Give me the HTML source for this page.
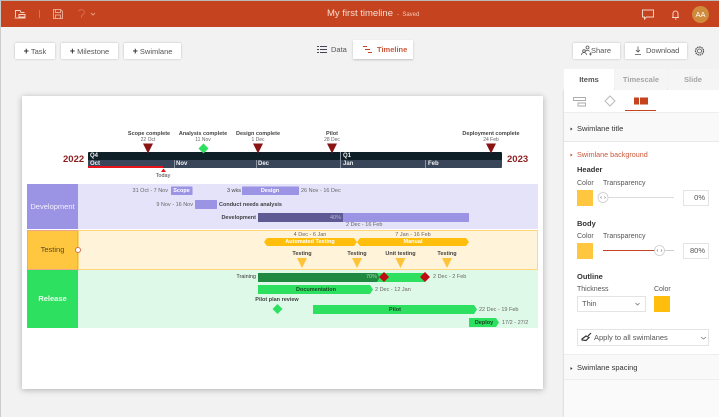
<!DOCTYPE html>
<html><head><meta charset="utf-8">
<style>
html,body{margin:0;padding:0}
body{width:719px;height:417px;overflow:hidden;position:relative;background:#f2f2f2;font-family:"Liberation Sans",sans-serif;color:#444}
.a{position:absolute}
.t{position:absolute;white-space:nowrap;line-height:1}
.c{transform:translateX(-50%)}
.r{transform:translateX(-100%)}
.btn{position:absolute;background:#fff;box-shadow:0 0 2px rgba(0,0,0,.22);border-radius:1px;font-size:7.500px;color:#555;line-height:16px;text-align:center}
.lb{font-size:5.500px;color:#222;font-weight:bold;opacity:.85}
.dt{font-size:5.500px;color:#666}
.ms{font-size:5px;color:#666}
.panel{font-size:7px;color:#555}
.h{font-size:7.500px;color:#333;font-weight:bold}
svg{position:absolute;overflow:visible}
</style></head><body>
<div class="a" style="left:0;top:0;width:719px;height:1px;background:#bbb"></div>
<div class="a" style="left:0;top:1px;width:1px;height:416px;background:#ccc"></div>
<div class="a" style="left:1px;top:1px;width:718px;height:26px;background:#c5431f"></div>

<svg style="left:0;top:0" width="719" height="30" fill="none" stroke="#f5d5c8" stroke-width="1">
<path d="M15 10.500h5l1 2h3.500M15.500 10.500v6.500M19 14.500h6v2.500h-6z M14.500 18h11"/>
<path d="M39.500 10v8" stroke="#d8745a"/>
<path d="M53.500 9.500h7l2 2v7h-9z M55.500 9.500v3h5v-3 M55.500 18.500v-3.500h5v3.500" stroke="#eba58f"/>
<path d="M78 11l3-1.500c3 0 4 2 3 4l-2.500 2.500v2" stroke="#d4694b"/>
<path d="M91 13l2 2 2-2" stroke="#e79a83"/>
<path d="M642.500 10h11v7h-7l-2 2v-2h-2z"/>
<path d="M672 17.500h7M673 17.500v-4a2.500 2.500 0 0 1 5 0v4M675 19h1.500"/>
</svg>
<div class="t" style="left:327px;top:9px;font-size:9.500px;color:#f8dfd5">My first timeline</div>
<div class="t" style="left:397px;top:12px;font-size:6px;color:#f3c9b8">-&nbsp;&nbsp;Saved</div>
<div class="a" style="left:692px;top:6px;width:17px;height:17px;border-radius:50%;background:#cf8a3c;color:#fff;font-size:7.500px;line-height:17px;text-align:center">AA</div>

<div class="btn" style="left:15px;top:43px;width:40px;height:16px"><b style="color:#333;font-size:9px">+</b> Task</div>
<div class="btn" style="left:61px;top:43px;width:57px;height:16px"><b style="color:#333;font-size:9px">+</b> Milestone</div>
<div class="btn" style="left:124px;top:43px;width:57px;height:16px"><b style="color:#333;font-size:9px">+</b> Swimlane</div>
<svg style="left:0;top:0" width="719" height="70" fill="none">
<path d="M317 46.500h2M320 46.500h7M317 49.500h2M320 49.500h7M317 52.500h2M320 52.500h7" stroke="#445"/>
</svg>
<div class="t" style="left:331px;top:46px;font-size:7.500px;color:#555">Data</div>
<div class="a" style="left:353px;top:40px;width:60px;height:19px;background:#fff;box-shadow:0 1px 2px rgba(0,0,0,.2)"></div>
<svg style="left:0;top:0" width="719" height="70" fill="none">
<path d="M363 46.500h4M365 49.500h5M368 52.500h4" stroke="#c5431f"/>
</svg>
<div class="t" style="left:377px;top:46px;font-size:7.500px;color:#c9583a;font-weight:bold">Timeline</div>
<div class="btn" style="left:573px;top:43px;width:47px;height:16px;padding-left:18px;box-sizing:border-box;text-align:left">Share</div>
<div class="btn" style="left:625px;top:43px;width:62px;height:16px;padding-left:21px;box-sizing:border-box;text-align:left">Download</div>
<svg style="left:0;top:0" width="719" height="70" fill="none" stroke="#555" stroke-width=".8">
<circle cx="584" cy="51" r="1.300"/><path d="M581.500 55a2.500 2.500 0 0 1 5 0"/>
<circle cx="587.500" cy="47.500" r="1.500"/><path d="M585.500 51.500a2.200 2.200 0 0 1 4 0M589 54h3M590.500 52.500v3"/>
<path d="M638 46.500v5.500M636 50l2 2 2-2M635 54.500h6"/>
<circle cx="699.500" cy="51" r="2"/><circle cx="699.500" cy="51" r="4" stroke-dasharray="1.600 .7" stroke-width="1.300"/>
</svg>

<!-- slide -->
<div class="a" style="left:22px;top:96px;width:521px;height:293px;background:#fff;box-shadow:0 1px 6px rgba(0,0,0,.28)"></div>

<!-- swimlanes -->
<div class="a" style="left:78px;top:184px;width:460px;height:45px;background:#e5e3f9"></div>
<div class="a" style="left:27px;top:184px;width:51px;height:45px;background:#9b93e4;color:#f4f2ff;font-size:7.500px;line-height:45px;text-align:center">Development</div>
<div class="a" style="left:78px;top:230px;width:460px;height:40px;box-sizing:border-box;background:#fff3da;border:1px solid #ffd67a"></div>
<div class="a" style="left:27px;top:229.500px;width:51px;height:40px;box-sizing:border-box;background:#ffc73f;border:1px solid #eda48c;color:#5a4a20;font-size:7.500px;line-height:38px;text-align:center">Testing</div>
<div class="a" style="left:75px;top:246.500px;width:4px;height:4px;background:#fff;border:1px solid #d9704f;border-radius:50%"></div>
<div class="a" style="left:78px;top:270px;width:460px;height:57.500px;background:#dff9e8"></div>
<div class="a" style="left:27px;top:270px;width:51px;height:57.500px;background:#2ee060;color:#eafff0;font-size:7.500px;font-weight:bold;line-height:57px;text-align:center">Release</div>

<!-- timescale -->
<div class="a" style="left:88px;top:152px;width:414px;height:8px;background:#0e1f27;border-radius:1px 1px 0 0"></div>
<div class="a" style="left:88px;top:160px;width:414px;height:8px;background:#39465a;border-radius:0 0 1px 1px"></div>
<div class="a" style="left:88px;top:166px;width:75px;height:1.500px;background:#e8141c"></div>
<div class="a" style="left:174px;top:160px;width:.7px;height:8px;background:#8b95a3"></div>
<div class="a" style="left:256px;top:160px;width:.7px;height:8px;background:#8b95a3"></div>
<div class="a" style="left:340px;top:152px;width:.7px;height:16px;background:#8b95a3"></div>
<div class="a" style="left:425px;top:160px;width:.7px;height:8px;background:#8b95a3"></div>
<div class="t" style="left:90px;top:153px;font-size:6px;color:#f0f0f0;font-weight:bold">Q4</div>
<div class="t" style="left:343px;top:153px;font-size:6px;color:#f0f0f0;font-weight:bold">Q1</div>
<div class="t" style="left:90px;top:161px;font-size:6px;color:#eee;font-weight:bold">Oct</div>
<div class="t" style="left:176px;top:161px;font-size:6px;color:#eee;font-weight:bold">Nov</div>
<div class="t" style="left:258px;top:161px;font-size:6px;color:#eee;font-weight:bold">Dec</div>
<div class="t" style="left:343px;top:161px;font-size:6px;color:#eee;font-weight:bold">Jan</div>
<div class="t" style="left:428px;top:161px;font-size:6px;color:#eee;font-weight:bold">Feb</div>
<div class="t" style="left:63px;top:155px;font-size:9.500px;font-weight:bold;color:#8f1f1f">2022</div>
<div class="t" style="left:507px;top:155px;font-size:9.500px;font-weight:bold;color:#8f1f1f">2023</div>
<div class="t c dt" style="left:163px;top:174px;color:#444">Today</div>

<!-- top milestones -->
<div class="t c lb" style="left:149px;top:132px">Scope complete</div><div class="t c ms" style="left:148px;top:138px">22 Oct</div>
<div class="t c lb" style="left:203px;top:132px">Analysis complete</div><div class="t c ms" style="left:203px;top:138px">11 Nov</div>
<div class="t c lb" style="left:258px;top:132px">Design complete</div><div class="t c ms" style="left:258px;top:138px">1 Dec</div>
<div class="t c lb" style="left:332px;top:132px">Pilot</div><div class="t c ms" style="left:332px;top:138px">28 Dec</div>
<div class="t c lb" style="left:491px;top:132px">Deployment complete</div><div class="t c ms" style="left:491px;top:138px">24 Feb</div>

<svg style="left:0;top:0" width="719" height="417">
<g fill="#8a1414">
<path d="M143 143.500h10l-5 10z"/><path d="M253 143.500h10l-5 10z"/><path d="M327 143.500h10l-5 10z"/><path d="M486 143.500h10l-5 10z"/>
</g>
<path d="M203.500 143.500l5 5-5 5-5-5z" fill="#2ee060"/>
<path d="M163.500 168.500l2.500 3.500h-5z" fill="#e8141c"/>
<!-- dev bars -->
<g fill="#9b93e4">
<rect x="171" y="186.500" width="21.500" height="8.500" rx=".5"/>
<rect x="242" y="186.500" width="57" height="8.500" rx=".5"/>
<rect x="195" y="200" width="22" height="9" rx=".5"/>
<rect x="258" y="213" width="211" height="9" rx=".5"/>
</g>
<rect x="258" y="213" width="85" height="9" fill="#5f5a94"/>
<!-- testing -->
<path d="M264 242l3-4h87l3 4-3 4h-87z" fill="#ffbe0b"/>
<path d="M357 242l3-4h106l3 4-3 4h-106z" fill="#ffbe0b"/>
<g fill="#ffc33a">
<path d="M297 258h10l-5 10z"/><path d="M352 258h10l-5 10z"/><path d="M395.500 258h10l-5 10z"/><path d="M442 258h10l-5 10z"/>
</g>
<!-- release -->
<path d="M258 273h167v9H258z" fill="#2ee060"/>
<path d="M258 273h119l2.500 4.500-2.500 4.500H258z" fill="#1f8a3f"/>
<path d="M384 272l5 5-5 5-5-5z" fill="#c00d15"/>
<path d="M425 272l5 5-5 5-5-5z" fill="#c00d15"/>
<path d="M258 285h112l3 4.500-3 4.500H258z" fill="#2ee060"/>
<path d="M277.500 304l5 5-5 5-5-5z" fill="#2ee060"/>
<path d="M313 305h161l3 4.500-3 4.500H313z" fill="#2ee060"/>
<path d="M469 318h27l3 4.500-3 4.500H469z" fill="#2ee060"/>
</svg>

<!-- dev text -->
<div class="t r dt" style="left:168px;top:189px">31 Oct - 7 Nov</div>
<div class="t c" style="left:181.500px;top:189px;font-size:5.500px;color:#fff;font-weight:bold">Scope</div>
<div class="t r dt" style="left:241px;top:189px;color:#444">3 wks</div>
<div class="t c" style="left:270px;top:189px;font-size:5.500px;color:#fff;font-weight:bold">Design</div>
<div class="t dt" style="left:301px;top:189px">26 Nov - 16 Dec</div>
<div class="t r dt" style="left:193px;top:203px">9 Nov - 16 Nov</div>
<div class="t lb" style="left:219px;top:203px">Conduct needs analysis</div>
<div class="t r lb" style="left:256px;top:216px">Development</div>
<div class="t r" style="left:341px;top:216px;font-size:5.500px;color:#b9b6dc">40%</div>
<div class="t dt" style="left:346px;top:223px">2 Dec - 16 Feb</div>
<!-- testing text -->
<div class="t c dt" style="left:310px;top:233px">4 Dec - 6 Jan</div>
<div class="t c dt" style="left:413px;top:233px">7 Jan - 16 Feb</div>
<div class="t c" style="left:310px;top:240px;font-size:5.500px;color:#fff;font-weight:bold">Automated Testing</div>
<div class="t c" style="left:413px;top:240px;font-size:5.500px;color:#fff;font-weight:bold">Manual</div>
<div class="t c lb" style="left:302px;top:252px">Testing</div>
<div class="t c lb" style="left:357px;top:252px">Testing</div>
<div class="t c lb" style="left:400.500px;top:252px">Unit testing</div>
<div class="t c lb" style="left:447px;top:252px">Testing</div>
<!-- release text -->
<div class="t r" style="left:256px;top:275px;font-size:5.500px;color:#333">Training</div>
<div class="t r" style="left:377px;top:275px;font-size:5.500px;color:#a6d4b4">70%</div>
<div class="t dt" style="left:433px;top:275px">2 Dec - 2 Feb</div>
<div class="t c" style="left:316px;top:288px;font-size:5.500px;color:#14451f;font-weight:bold">Documentation</div>
<div class="t dt" style="left:375px;top:288px">2 Dec - 12 Jan</div>
<div class="t c lb" style="left:277px;top:298px">Pilot plan review</div>
<div class="t c" style="left:395px;top:308px;font-size:5.500px;color:#14451f;font-weight:bold">Pilot</div>
<div class="t dt" style="left:479px;top:308px">22 Dec - 19 Feb</div>
<div class="t c" style="left:484px;top:321px;font-size:5.500px;color:#14451f;font-weight:bold">Deploy</div>
<div class="t dt" style="left:502px;top:321px">17/2 - 27/2</div>

<!-- panel -->
<div class="a" style="left:564px;top:90px;width:155px;height:327px;background:#fff;box-shadow:0 0 2px rgba(0,0,0,.2)"></div>
<div class="a" style="left:564px;top:69px;width:50px;height:22px;background:#fff"></div>
<div class="a" style="left:615px;top:69px;width:52px;height:20.500px;background:#f5f5f5"></div>
<div class="a" style="left:668px;top:69px;width:51px;height:20.500px;background:#f5f5f5"></div>
<div class="t c" style="left:589px;top:76px;font-size:7.500px;font-weight:bold;color:#555">Items</div>
<div class="t c" style="left:641px;top:76px;font-size:7.500px;font-weight:bold;color:#a5a5a5">Timescale</div>
<div class="t c" style="left:693px;top:76px;font-size:7.500px;font-weight:bold;color:#a5a5a5">Slide</div>
<div class="a" style="left:564px;top:112px;width:155px;height:30px;background:#f9f9f9;border-top:1px solid #eee;border-bottom:1px solid #e8e8e8;box-sizing:border-box"></div>
<div class="a" style="left:625px;top:110px;width:31px;height:1px;background:#c5431f"></div>
<svg style="left:0;top:0" width="719" height="417" fill="none">
<path d="M573.500 97.500h12v3h-12zM578 103h7.500v3H578z" stroke="#aaa" stroke-width=".9"/>
<path d="M610 96l5 5-5 5-5-5z" stroke="#bbb"/>
<rect x="634" y="97.500" width="5" height="7" fill="#c5431f"/><rect x="640" y="97.500" width="8" height="7" fill="#c5431f"/>
<path d="M570.500 127.500l2 1.500-2 1.500z" fill="#333"/>
<path d="M570.500 153.500l2 1.500-2 1.500z" fill="#c5431f"/>
<path d="M607 197.500h67" stroke="#ddd"/>
<circle cx="603" cy="197.500" r="5" fill="#fff" stroke="#ccc" stroke-width=".8"/>
<path d="M601.500 196.500l-1 1 1 1M604.500 196.500l1 1-1 1" stroke="#888" stroke-width=".6"/>
<path d="M603 250.500h52" stroke="#c5431f"/><path d="M665 250.500h9" stroke="#ccc"/>
<circle cx="659.500" cy="250.500" r="5" fill="#fff" stroke="#ccc" stroke-width=".8"/>
<path d="M658 249.500l-1 1 1 1M661 249.500l1 1-1 1" stroke="#888" stroke-width=".6"/>
</svg>
<div class="t h" style="left:577px;top:125px;font-weight:normal;color:#333">Swimlane title</div>
<div class="t" style="left:577px;top:151px;font-size:7.200px;color:#c9583a">Swimlane background</div>
<div class="t h" style="left:577px;top:166px">Header</div>
<div class="t panel" style="left:577px;top:180px">Color</div>
<div class="t panel" style="left:603px;top:180px">Transparency</div>
<div class="a" style="left:577px;top:190px;width:16px;height:16px;background:#ffc73f"></div>
<div class="a" style="left:683px;top:190px;width:26px;height:16px;box-sizing:border-box;border:1px solid #e4e4e4;background:#fff;font-size:7.500px;color:#555;line-height:14px;text-align:right;padding-right:3px">0%</div>
<div class="t h" style="left:577px;top:220px">Body</div>
<div class="t panel" style="left:577px;top:233px">Color</div>
<div class="t panel" style="left:603px;top:233px">Transparency</div>
<div class="a" style="left:577px;top:243px;width:16px;height:16px;background:#ffc73f"></div>
<div class="a" style="left:683px;top:243px;width:26px;height:16px;box-sizing:border-box;border:1px solid #e4e4e4;background:#fff;font-size:7.500px;color:#555;line-height:14px;text-align:right;padding-right:3px">80%</div>
<div class="t h" style="left:577px;top:273px">Outline</div>
<div class="t panel" style="left:577px;top:286px">Thickness</div>
<div class="t panel" style="left:654px;top:286px">Color</div>
<div class="a" style="left:577px;top:296px;width:69px;height:16px;box-sizing:border-box;border:1px solid #e4e4e4;background:#fff;font-size:7.500px;color:#555;line-height:14px;padding-left:4px">Thin</div>
<div class="a" style="left:654px;top:296px;width:16px;height:16px;background:#ffbe0b"></div>
<div class="a" style="left:577px;top:329px;width:132px;height:17px;box-sizing:border-box;border:1px solid #e4e4e4;background:#fff;font-size:7.500px;color:#555;line-height:15px;padding-left:16px">Apply to all swimlanes</div>
<svg style="left:0;top:0" width="719" height="417" fill="none">
<path d="M635.500 303l2 2 2-2" stroke="#777" stroke-width=".8"/>
<path d="M582 339l4-3 3 1.500-3 3-4-.5zM588 336l3-3" stroke="#333" stroke-width="1.200"/>
<path d="M701 337l2.500 2 2.500-2" stroke="#777" stroke-width=".8"/>
</svg>
<div class="a" style="left:564px;top:354px;width:155px;height:26px;background:#f9f9f9;border-top:1px solid #eee;border-bottom:1px solid #eee;box-sizing:border-box"></div>
<div class="a" style="left:564px;top:380px;width:155px;height:37px;background:#fafafa"></div>
<svg style="left:0;top:0" width="719" height="417"><path d="M570.500 367l2 1.500-2 1.500z" fill="#333"/></svg>
<div class="t h" style="left:577px;top:364px;font-weight:normal;color:#333">Swimlane spacing</div>
</body></html>
